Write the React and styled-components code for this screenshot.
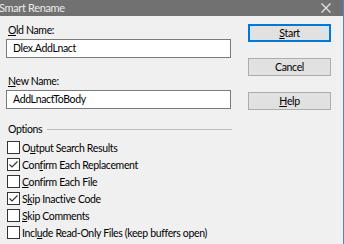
import React from "react";
import styled, { createGlobalStyle } from "styled-components";

const Global = createGlobalStyle`
  html, body { margin: 0; padding: 0; background: #f0f0f0; }
  body { font-family: Lato, "Noto Sans", sans-serif; font-size: 10.5px; letter-spacing: -0.35px; color: #000; }
`;

const Window = styled.div`
  width: 344px;
  height: 244px;
  box-sizing: border-box;
  border-right: 1px solid #4a88bf;
  background: #f0f0f0;
  display: flex;
  flex-direction: column;
  overflow: hidden;
`;

const TitleBar = styled.div`
  height: 16px;
  background: #717171;
  color: #ececec;
  display: flex;
  align-items: center;
  justify-content: space-between;
  padding: 0 12px 0 0;
  line-height: 16px;
  font-size: 11px;
`;

const Title = styled.span`
  margin-left: -1px;
`;

const Close = styled.svg`
  width: 10px;
  height: 10px;
  display: block;
`;

const Content = styled.div`
  display: flex;
  padding: 0 12px 0 6px;
`;

const LeftCol = styled.div`
  width: 225px;
  display: flex;
  flex-direction: column;
  padding-top: 7px;
`;

const RightCol = styled.div`
  margin-left: 17px;
  width: 83px;
  display: flex;
  flex-direction: column;
  gap: 16px;
  padding-top: 8px;
`;

const Label = styled.div`
  padding-left: 2px;
  line-height: 15px;
  margin-top: ${(p) => (p.$first ? "0" : "16px")};
  margin-bottom: 1px;
`;

const Input = styled.div`
  height: 19px;
  box-sizing: border-box;
  border: 1px solid #7a7a7a;
  background: #fff;
  padding-left: 6px;
  line-height: 17px;
`;

const Button = styled.div`
  height: 18px;
  box-sizing: border-box;
  background: #e1e1e1;
  border: ${(p) => (p.$default ? "2px solid #0078d7" : "1px solid #adadad")};
  display: flex;
  align-items: center;
  justify-content: center;
  line-height: 14px;
`;

const U = styled.span`
  text-decoration: underline;
  text-underline-offset: 1px;
`;

const Options = styled.div`
  padding: 12px 0 0 7px;
  width: 225px;
  display: flex;
  flex-direction: column;
`;

const GroupHeader = styled.div`
  display: flex;
  align-items: center;
  line-height: 15px;
  margin-left: 1px;
  margin-bottom: 2px;
  &::after {
    content: "";
    flex: 1;
    height: 1px;
    background: #bcbcbc;
    margin-left: 5px;
  }
`;

const Row = styled.div`
  height: 17px;
  display: flex;
  align-items: center;
  white-space: nowrap;
`;

const Box = styled.span`
  width: 13px;
  height: 13px;
  box-sizing: border-box;
  border: 1px solid #333;
  background: #fff;
  margin-right: 2px;
  flex: none;
  display: flex;
  align-items: center;
  justify-content: center;
`;

const items = [
  { pre: "O", u: "u", post: "tput Search Results", checked: false },
  { pre: "Con", u: "f", post: "irm Each Replacement", checked: true },
  { pre: "", u: "C", post: "onfirm Each File", checked: false },
  { pre: "S", u: "k", post: "ip Inactive Code", checked: true },
  { pre: "", u: "S", post: "kip Comments", checked: false },
  { pre: "Incl", u: "u", post: "de Read-Only Files (keep buffers open)", checked: false },
];

function Check({ checked }) {
  return (
    <Box>
      {checked && (
        <svg width="11" height="11" viewBox="0 0 11 11">
          <path d="M1.5 5.5 L4 8 L9.5 2.5" fill="none" stroke="#333" strokeWidth="1.2" />
        </svg>
      )}
    </Box>
  );
}

export default function App() {
  return (
    <>
      <Global />
      <Window>
        <TitleBar>
          <Title>Smart Rename</Title>
          <Close viewBox="0 0 10 10">
            <path d="M0.5 0.5 L9.5 9.5 M9.5 0.5 L0.5 9.5" stroke="#e8e8e8" strokeWidth="1.2" />
          </Close>
        </TitleBar>
        <Content>
          <LeftCol>
            <Label $first>
              <U>O</U>ld Name:
            </Label>
            <Input>Dlex.AddLnact</Input>
            <Label>
              <U>N</U>ew Name:
            </Label>
            <Input>AddLnactToBody</Input>
          </LeftCol>
          <RightCol>
            <Button $default>
              <U>S</U>tart
            </Button>
            <Button>Cancel</Button>
            <Button>
              <U>H</U>elp
            </Button>
          </RightCol>
        </Content>
        <Options>
          <GroupHeader>Options</GroupHeader>
          {items.map((it, i) => (
            <Row key={i}>
              <Check checked={it.checked} />
              <span>
                {it.pre}
                <U>{it.u}</U>
                {it.post}
              </span>
            </Row>
          ))}
        </Options>
      </Window>
    </>
  );
}
